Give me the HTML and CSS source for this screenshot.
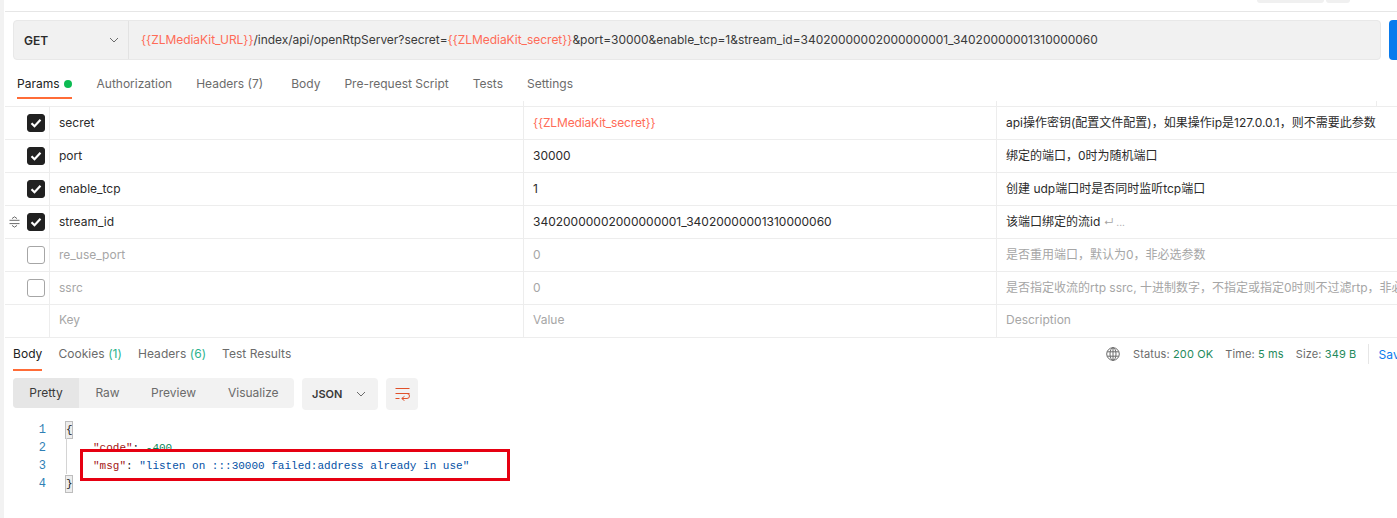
FILE: index.html
```html
<!DOCTYPE html>
<html lang="zh">
<head>
<meta charset="utf-8">
<title>Postman request</title>
<link rel="stylesheet" href="styles.css">
</head>
<body>
<div class="app">
  <div class="topstrip"><span class="tb tb-a"></span><span class="tb tb-b"></span></div>
  <div class="urlrow">
    <div class="urlbar">
      <div class="method"><span>GET</span><svg class="chev" width="10" height="6" viewBox="0 0 10 6"><path d="M1 1l4 4 4-4" fill="none" stroke="#6b6b6b" stroke-width="1"/></svg></div>
      <div class="url"><span class="var">{{ZLMediaKit_URL}}</span>/index/api/openRtpServer?secret=<span class="var">{{ZLMediaKit_secret}}</span>&amp;port=30000&amp;enable_tcp=1&amp;stream_id=34020000002000000001_34020000001310000060</div>
    </div>
    <div class="send"></div>
  </div>
  <div class="tabs">
    <div class="tab active">Params<i class="dot"></i></div>
    <div class="tab">Authorization</div>
    <div class="tab w-head">Headers <span class="cnt">(7)</span></div>
    <div class="tab">Body</div>
    <div class="tab">Pre-request Script</div>
    <div class="tab">Tests</div>
    <div class="tab">Settings</div>
  </div>
  <div class="table">
    <div class="thead"><span class="t1"></span><span class="t2"></span><span class="t3"></span></div>
    <div class="row">
      <div class="c-drag"></div>
      <div class="c-check"><span class="cb on"><svg width="12" height="10" viewBox="0 0 12 10"><path d="M1.5 5.2l3 3 6-6.4" fill="none" stroke="#fff" stroke-width="2.2"/></svg></span></div>
      <div class="c-key">secret</div><div class="c-val var tight">{{ZLMediaKit_secret}}</div><div class="c-desc">api操作密钥(配置文件配置)，如果操作ip是127.0.0.1，则不需要此参数</div>
    </div>
    <div class="row">
      <div class="c-drag"></div>
      <div class="c-check"><span class="cb on"><svg width="12" height="10" viewBox="0 0 12 10"><path d="M1.5 5.2l3 3 6-6.4" fill="none" stroke="#fff" stroke-width="2.2"/></svg></span></div>
      <div class="c-key">port</div><div class="c-val">30000</div><div class="c-desc">绑定的端口，0时为随机端口</div>
    </div>
    <div class="row">
      <div class="c-drag"></div>
      <div class="c-check"><span class="cb on"><svg width="12" height="10" viewBox="0 0 12 10"><path d="M1.5 5.2l3 3 6-6.4" fill="none" stroke="#fff" stroke-width="2.2"/></svg></span></div>
      <div class="c-key">enable_tcp</div><div class="c-val">1</div><div class="c-desc">创建 udp端口时是否同时监听tcp端口</div>
    </div>
    <div class="row">
      <div class="c-drag"><svg width="11" height="12" viewBox="0 0 11 12"><path d="M0.5 4.3h10M0.5 7.6h10M3 2.6L5.5 0.8 8 2.6M3 9.4l2.5 1.8L8 9.4" fill="none" stroke="#6b6b6b" stroke-width="1"/></svg></div>
      <div class="c-check"><span class="cb on"><svg width="12" height="10" viewBox="0 0 12 10"><path d="M1.5 5.2l3 3 6-6.4" fill="none" stroke="#fff" stroke-width="2.2"/></svg></span></div>
      <div class="c-key">stream_id</div><div class="c-val">34020000002000000001_34020000001310000060</div><div class="c-desc">该端口绑定的流id <span class="more">↵ ...</span></div>
    </div>
    <div class="row off">
      <div class="c-drag"></div>
      <div class="c-check"><span class="cb"></span></div>
      <div class="c-key">re_use_port</div><div class="c-val">0</div><div class="c-desc">是否重用端口，默认为0，非必选参数</div>
    </div>
    <div class="row off">
      <div class="c-drag"></div>
      <div class="c-check"><span class="cb"></span></div>
      <div class="c-key">ssrc</div><div class="c-val">0</div><div class="c-desc">是否指定收流的rtp ssrc, 十进制数字，不指定或指定0时则不过滤rtp，非必选参数</div>
    </div>
    <div class="row off last">
      <div class="c-drag"></div>
      <div class="c-check"></div>
      <div class="c-key">Key</div><div class="c-val">Value</div><div class="c-desc">Description</div>
    </div>
  </div>
  <div class="resbar">
    <div class="tab active">Body</div>
    <div class="tab">Cookies <span class="cnt green">(1)</span></div>
    <div class="tab">Headers <span class="cnt green">(6)</span></div>
    <div class="tab">Test Results</div>
    <div class="status">
      <svg class="globe" width="14" height="14" viewBox="0 0 14 14"><g fill="none" stroke="#6b6b6b" stroke-width="1"><circle cx="7" cy="7" r="6.3"/><ellipse cx="7" cy="7" rx="3" ry="6.3"/><path d="M1.2 4.8h11.6M1.2 9.2h11.6M7 .7v12.6"/></g></svg>
      <span class="st">Status: <b>200 OK</b></span>
      <span class="st">Time: <b>5 ms</b></span>
      <span class="st">Size: <b>349 B</b></span>
      <span class="sep"></span>
      <span class="save">Save Response</span>
    </div>
  </div>
  <div class="viewbar">
    <div class="seg">
      <span class="seg-i sel">Pretty</span><span class="seg-i s-raw">Raw</span><span class="seg-i s-pre">Preview</span><span class="seg-i s-vis">Visualize</span>
    </div>
    <div class="fmt"><span>JSON</span><svg width="10" height="6" viewBox="0 0 10 6"><path d="M1 1l4 4 4-4" fill="none" stroke="#6b6b6b" stroke-width="1"/></svg></div>
    <div class="wrap"><svg width="15" height="14" viewBox="0 0 15 14"><path d="M0.5 1.5h14M0.5 6.5h14M0.5 11.5h4M7 11.5h5a2.5 2.5 0 0 0 0-5M9.5 9.3l-2.8 2.2 2.8 2.2" fill="none" stroke="#e0512a" stroke-width="1"/></svg></div>
  </div>
  <div class="code">
    <div class="ln"><span class="no">1</span><span class="tx"><span class="br">{</span></span></div>
    <div class="ln"><span class="no">2</span><span class="tx ind"><span class="k">"code"</span>: <span class="n">-400</span>,</span></div>
    <div class="ln top"><span class="no">3</span><span class="tx ind"><span class="k">"msg"</span>: <span class="s">"listen on :::30000 failed:address already in use"</span></span></div>
    <div class="ln"><span class="no">4</span><span class="tx"><span class="br">}</span></span></div>
    <div class="guide"></div>
    <div class="mark"></div>
  </div>
</div>
</body>
</html>
```
FILE: styles.css
```css
* { box-sizing: border-box; }
html, body { margin: 0; height: 100%; overflow: hidden; background: #fff; }
body { font-family: Inter, "Noto Sans CJK SC", sans-serif; font-size: 12px; color: #212121; }
.app { width: 1397px; height: 518px; overflow: hidden; border-left: 4px solid #f2f2f2; }
.topstrip { height: 12px; border-bottom: 1px solid #e6e6e6; display: flex; justify-content: flex-end; gap: 2px; padding-right: 47px; margin-left: 1px; }
.tb { height: 3px; background: #f0f0f0; border-radius: 0 0 3px 3px; }
.tb-a { width: 67px; }
.tb-b { width: 24px; }
.urlrow { display: flex; margin: 8px 0 0 9px; height: 40px; }
.urlbar { width: 1368px; display: flex; background: #f1f1f1; border: 1px solid #e8e8e8; border-radius: 4px; flex: none; }
.method { width: 115px; display: flex; align-items: center; justify-content: space-between; padding: 0 9px 0 10px; border-right: 1px solid #e2e2e2; font-weight: 600; color: #2b2b2b; }
.url { padding-left: 12px; line-height: 37px; color: #3a3a3a; white-space: nowrap; font-size: 12px; letter-spacing: -0.035px; }
.var { color: #ff6b57; }
.send { margin-left: 8px; width: 30px; background: #097bed; border-radius: 4px 0 0 4px; flex: none; }
.tabs { display: flex; height: 32px; margin: 9px 0 0 13px; }
.tab { height: 100%; line-height: 30px; color: #6b6b6b; white-space: nowrap; }
.tabs .tab { margin-right: 24px; }
.tab.active { color: #212121; border-bottom: 2px solid #ff6c37; }
.tabs .tab.active { height: 30px; margin-right: 25px; }
.dot { display: inline-block; width: 8px; height: 8px; margin-left: 4px; border-radius: 50%; background: #0cbb52; }
.cnt { color: #6b6b6b; }
.w-head { width: 71px; }
.table { margin-left: 1px; }
.thead { position: relative; height: 6px; border-bottom: 1px solid #ededed; display: flex; }
.thead span { height: 6px; width: 1px; background: #ededed; flex: none; }
.t1 { margin-left: 518px; }
.t2 { margin-left: 472px; }
.t3 { margin-left: 379px; }
.row { display: flex; height: 33px; border-bottom: 1px solid #ededed; line-height: 32px; color: #2b2b2b; }
.row.off { color: #a6a6a6; }
.row.last { line-height: 30px; }
.c-drag { width: 15px; display: flex; align-items: center; justify-content: flex-end; flex: none; }
.c-check { width: 30px; display: flex; align-items: center; padding-left: 7px; border-right: 1px solid #ededed; flex: none; }
.cb { width: 18px; height: 18px; border-radius: 3px; border: 1px solid #a6a6a6; display: flex; align-items: center; justify-content: center; }
.cb.on { background: #212121; border-color: #212121; }
.c-key { width: 474px; padding-left: 9px; border-right: 1px solid #ededed; flex: none; }
.c-val { width: 473px; padding-left: 9px; border-right: 1px solid #ededed; flex: none; }
.c-val.tight { letter-spacing: -0.15px; }
.c-desc { padding-left: 9px; white-space: nowrap; overflow: hidden; flex: none; width: 400px; }
.more { color: #a6a6a6; font-size: 10px; }
.resbar { display: flex; height: 33px; margin-left: 9px; }
.resbar .tab { margin-right: 16px; line-height: 32px; letter-spacing: 0.05px; }
.resbar .tab.active { height: 33px; margin-right: 16px; }
.cnt.green { color: #2bb38d; }
.status { margin-left: auto; display: flex; align-items: center; gap: 12px; height: 32px; color: #6b6b6b; font-size: 11px; letter-spacing: 0.12px; white-space: nowrap; width: 291px; overflow: hidden; flex: none; }
.globe { flex: none; margin-right: 1px; }
.st b { font-weight: 400; color: #1f8a5c; }
.sep { width: 1px; height: 20px; background: #e6e6e6; flex: none; }
.save { color: #097bed; font-size: 12px; margin-left: -3px; }
.viewbar { display: flex; align-items: flex-start; margin: 7px 0 0 9px; height: 36px; }
.seg { display: flex; width: 281px; height: 30px; background: #f2f2f2; border-radius: 4px; overflow: hidden; color: #6b6b6b; flex: none; }
.seg-i { line-height: 30px; flex: none; }
.sel { width: 66px; background: #e6e6e6; color: #3a3a3a; text-align: center; }
.s-raw { width: 57px; text-align: center; }
.s-pre { width: 77px; padding-left: 15px; }
.s-vis { padding-left: 15px; }
.fmt { margin-left: 8px; width: 76px; height: 32px; background: #f2f2f2; border-radius: 4px; display: flex; align-items: center; justify-content: space-between; padding: 0 12px 0 10px; font-weight: 600; font-size: 11px; color: #3a3a3a; flex: none; }
.wrap { margin-left: 8px; width: 32px; height: 32px; background: #f2f2f2; border-radius: 4px; display: flex; align-items: center; justify-content: center; flex: none; }
.code { position: relative; padding-top: 7px; font-family: "Liberation Mono", monospace; font-size: 11px; line-height: 18px; color: #212121; }
.ln { display: flex; height: 18px; white-space: pre; }
.ln.top { position: relative; z-index: 2; }
.no { width: 42px; text-align: right; color: #2f7fb5; flex: none; line-height: 18px; font-size: 12px; }
.tx { margin-left: 20px; }
.ind { margin-left: 47px; }
.br { display: inline-block; width: 6px; height: 16px; line-height: 16px; background: #ededed; outline: 1px solid #bdbdbd; }
.k { color: #a31515; }
.n { color: #098658; }
.s { color: #0451a5; }
.guide { position: absolute; left: 62px; top: 24px; width: 1px; height: 36px; background: #d4d4d4; }
.mark { position: absolute; z-index: 1; left: 76px; top: 35px; width: 430px; height: 32px; border: 3px solid #e60012; background: #fff; }
```
